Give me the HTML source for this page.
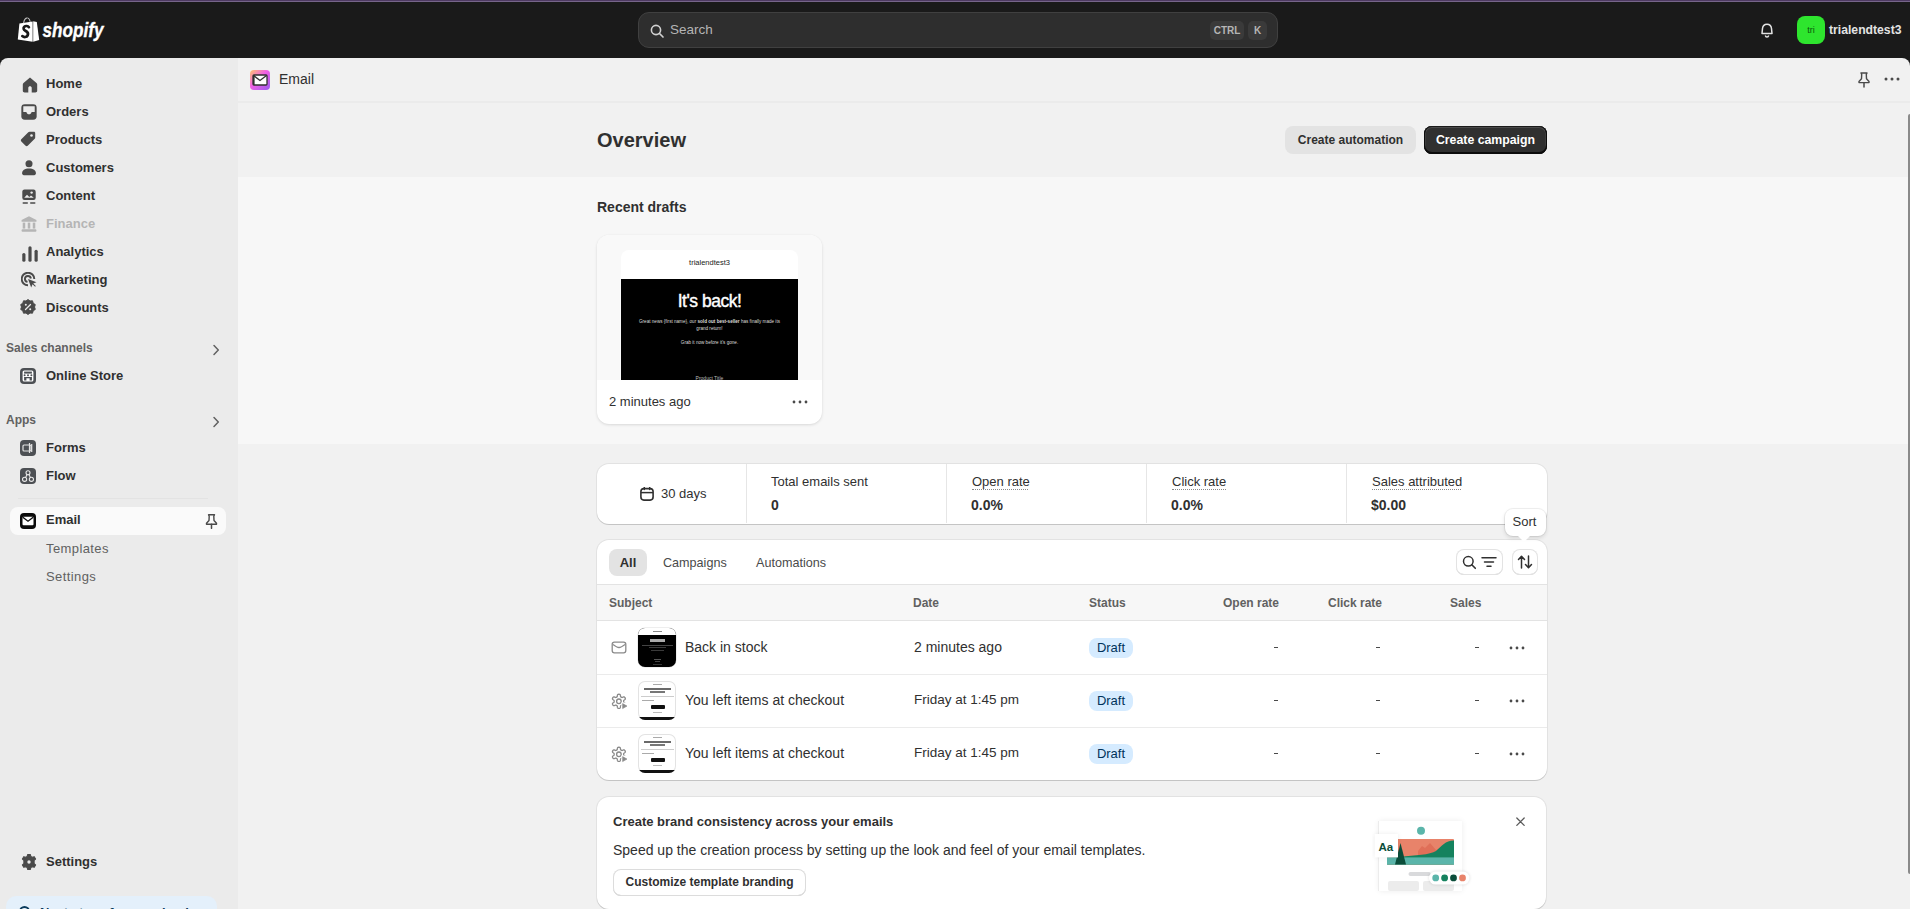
<!DOCTYPE html>
<html><head><meta charset="utf-8">
<style>
*{box-sizing:border-box;margin:0;padding:0}
html,body{width:1910px;height:909px;overflow:hidden;background:#1a1a1a;font-family:"Liberation Sans",sans-serif;color:#303030}
.abs{position:absolute}
#topline{position:absolute;left:0;top:0;width:1910px;height:2px;background:linear-gradient(#4e3a62 0,#4e3a62 1px,#76658a 1px,#76658a 2px);z-index:5}
#topbar{position:absolute;left:0;top:0;width:1910px;height:58px;background:#1a1a1a}
#side{position:absolute;left:0;top:58px;width:238px;height:851px;background:#ebebeb;border-top-left-radius:8px}
#main{position:absolute;left:238px;top:58px;width:1672px;height:851px;background:#f1f1f1;border-top-right-radius:8px;overflow:hidden}
.nav{position:absolute;left:0;width:238px;height:28px;font-size:13px;font-weight:bold;color:#303030}
.nav .ic{position:absolute;left:20px;top:7px;width:16px;height:16px}
.nav .tx{position:absolute;left:46px;top:7px;line-height:15px}
.sub{position:absolute;left:46px;font-size:13px;color:#616161}
.sect{position:absolute;left:6px;font-size:13px;font-weight:bold;color:#616161}
.chev{position:absolute;left:209px;width:12px;height:12px}
.card{position:absolute;background:#fff;border-radius:12px;box-shadow:0 1px 0 rgba(26,26,26,.07),0 0 0 1px rgba(0,0,0,.06) inset, 0 -1px 0 rgba(0,0,0,.05) inset}
</style></head>
<body>
<div id="topline"></div>
<div id="topbar">
  <svg class="abs" style="left:14px;top:14px" width="30" height="32" viewBox="14 14 30 32">
    <path d="M19.4 23.6 L32.6 21.4 L32.6 41.8 L17.8 39.6 Z" fill="#fff"/>
    <path d="M33.2 21.3 L36.8 22.1 L39.2 40.1 L33.2 41.8 Z" fill="#fff"/>
    <path d="M23.6 23.2 C24 20.4 25 18.4 26.6 18.1 C28.2 17.8 29.4 18.8 30.2 21.8" fill="none" stroke="#bbb" stroke-width="1.1"/>
    <path d="M27.2 18.2 C28.2 19 28.8 20.4 29 22" fill="none" stroke="#1a1a1a" stroke-width="0.6"/>
    <path d="M28.9 27.2 C28 25.9 25.6 25.5 24.3 26.7 C23 27.9 23.5 29.7 25.4 30.8 C27.6 32 28.5 33.6 27.7 35.4 C26.8 37.4 23.9 37.5 22.3 36.1" fill="none" stroke="#1a1a1a" stroke-width="2.7" stroke-linecap="round"/>
  </svg>
  <svg class="abs" style="left:42px;top:18px" width="64" height="26" viewBox="0 0 64 26"><text x="0.5" y="18.6" textLength="61" lengthAdjust="spacingAndGlyphs" font-family="Liberation Sans" font-weight="bold" font-style="italic" font-size="19.5" fill="#fff" stroke="#fff" stroke-width="0.35">shopify</text></svg>
  <div class="abs" style="left:638px;top:12px;width:640px;height:36px;background:#2e2e2e;border:1px solid #404040;border-radius:11px"></div>
  <svg class="abs" style="left:650px;top:24px" width="15" height="15" viewBox="0 0 15 15"><circle cx="6" cy="6" r="4.6" fill="none" stroke="#d0d0d0" stroke-width="1.6"/><path d="M9.5 9.5 L13 13" stroke="#d0d0d0" stroke-width="1.7" stroke-linecap="round"/></svg>
  <div class="abs" style="left:670px;top:22px;font-size:13.5px;color:#b5b5b5">Search</div>
  <div class="abs" style="left:1210px;top:21px;width:34px;height:19px;background:#3a3a3a;border-radius:5px;font-size:10px;font-weight:bold;color:#b5b5b5;text-align:center;line-height:20px">CTRL</div>
  <div class="abs" style="left:1248px;top:21px;width:19px;height:19px;background:#3a3a3a;border-radius:5px;font-size:10px;font-weight:bold;color:#b5b5b5;text-align:center;line-height:20px">K</div>
  <svg class="abs" style="left:1758px;top:21px" width="18" height="18" viewBox="0 0 18 18"><path d="M4 12.5 L4.5 7.5 C4.8 4.8 6.7 3.2 9 3.2 C11.3 3.2 13.2 4.8 13.5 7.5 L14 12.5 Z" fill="none" stroke="#e3e3e3" stroke-width="1.5" stroke-linejoin="round"/><path d="M7.3 14.5 C7.5 15.6 8.2 16 9 16 C9.8 16 10.5 15.6 10.7 14.5" fill="none" stroke="#e3e3e3" stroke-width="1.4"/></svg>
  <div class="abs" style="left:1797px;top:16px;width:28px;height:28px;background:#2ee52e;border-radius:8px;font-size:9px;color:#0a5a0a;text-align:center;line-height:28px">tri</div>
  <div class="abs" style="left:1829px;top:23px;font-size:12.2px;font-weight:bold;color:#e3e3e3">trialendtest3</div>
</div>
<div id="side">
</div>
<!-- nav items: baseline = top+12 with line-height 15 at 13px -->
<div class="nav" style="top:76px"><svg class="ic" style="left:22px;top:1px" width="13" height="14" viewBox="0 0 13 14"><path d="M6.5 0.5 L12.2 5.2 C12.6 5.5 12.8 6 12.8 6.5 L12.8 12 C12.8 12.9 12.1 13.5 11.2 13.5 L8 13.5 L8 9.5 C8 8.8 7.3 8.2 6.5 8.2 C5.7 8.2 5 8.8 5 9.5 L5 13.5 L1.8 13.5 C0.9 13.5 0.2 12.9 0.2 12 L0.2 6.5 C0.2 6 0.4 5.5 0.8 5.2 Z" fill="#4a4a4a"/></svg><span class="tx" style="top:0">Home</span></div>
<div class="nav" style="top:104px"><svg class="ic" style="left:21px;top:0" width="14" height="14" viewBox="0 0 14 14"><rect x="0.3" y="0.3" width="13.4" height="13.4" rx="3" fill="#4a4a4a"/><path d="M2 2 L12 2 L12 7 L9.3 7 C9 8.4 8 9 7 9 C6 9 5 8.4 4.7 7 L2 7 Z" fill="#ebebeb"/></svg><span class="tx" style="top:0">Orders</span></div>
<div class="nav" style="top:132px"><svg class="ic" style="left:20px;top:-1px" width="16" height="16" viewBox="0 0 16 16"><path d="M9.5 0.8 L14 0.8 C14.6 0.8 15.2 1.4 15.2 2 L15.2 6.5 C15.2 7 15 7.4 14.7 7.7 L7.7 14.7 C7.1 15.3 6.2 15.3 5.6 14.7 L1.3 10.4 C0.7 9.8 0.7 8.9 1.3 8.3 L8.3 1.3 C8.6 1 9 0.8 9.5 0.8 Z" fill="#4a4a4a"/><circle cx="11.5" cy="4.5" r="1.3" fill="#ebebeb"/></svg><span class="tx" style="top:0">Products</span></div>
<div class="nav" style="top:160px"><svg class="ic" style="left:21px;top:0" width="14" height="15" viewBox="0 0 14 15"><circle cx="7" cy="3.6" r="3.3" fill="#4a4a4a"/><path d="M0.5 12.5 C0.5 9.5 3 8 7 8 C11 8 13.5 9.5 13.5 12.5 C13.5 13.6 12.8 14.2 11.8 14.2 L2.2 14.2 C1.2 14.2 0.5 13.6 0.5 12.5 Z" fill="#4a4a4a"/></svg><span class="tx" style="top:0">Customers</span></div>
<div class="nav" style="top:188px"><svg class="ic" style="left:21px;top:0.5px" width="14" height="16" viewBox="0 0 14 16"><rect x="0.3" y="0.5" width="13.4" height="10.5" rx="2.2" fill="#4a4a4a"/><path d="M2.2 8.8 L5 5.8 L7.3 8 L9 6.5 L11.8 8.8 Z" fill="#ebebeb"/><circle cx="9.6" cy="3.6" r="1.2" fill="#ebebeb"/><rect x="2.5" y="5.5" width="2.6" height="2" fill="#ebebeb" opacity="0"/><rect x="0.5" y="13.3" width="5.5" height="1.5" rx=".7" fill="#4a4a4a"/><rect x="8" y="13.3" width="5.5" height="1.5" rx=".7" fill="#4a4a4a"/></svg><span class="tx" style="top:0">Content</span></div>
<div class="nav" style="top:216px;color:#b5b5b5"><svg class="ic" style="left:21px;top:0" width="14" height="14" viewBox="0 0 14 14"><path d="M7 0.3 L13.5 3.6 L13.5 5 L0.5 5 L0.5 3.6 Z" fill="#b5b5b5"/><rect x="1.5" y="5.8" width="2.2" height="5.2" fill="#b5b5b5"/><rect x="5.9" y="5.8" width="2.2" height="5.2" fill="#b5b5b5"/><rect x="10.3" y="5.8" width="2.2" height="5.2" fill="#b5b5b5"/><rect x="0.5" y="11.6" width="13" height="2.2" rx=".8" fill="#b5b5b5"/></svg><span class="tx" style="top:0">Finance</span></div>
<div class="nav" style="top:244px"><svg class="ic" style="left:22px;top:1.5px" width="12" height="12" viewBox="0 0 12 12"><rect x="0.2" y="5.2" width="2.4" height="6.6" rx="1.2" fill="#4a4a4a"/><rect x="4.8" y="0.2" width="2.4" height="11.6" rx="1.2" fill="#4a4a4a"/><rect x="9.4" y="2.8" width="2.4" height="9" rx="1.2" fill="#4a4a4a"/></svg><span class="tx" style="top:0">Analytics</span></div>
<div class="nav" style="top:272px"><svg class="ic" style="left:21px;top:0" width="16" height="16" viewBox="0 0 16 16"><path d="M13.3 7 A6.3 6.3 0 1 0 7 13.3" fill="none" stroke="#4a4a4a" stroke-width="1.9"/><path d="M9.9 6.5 A3 3 0 1 0 6.5 9.9" fill="none" stroke="#4a4a4a" stroke-width="1.9"/><path d="M7 7 L15.5 10.2 L12.2 11.5 L14.8 14.1 L14.1 14.8 L11.5 12.2 L10.2 15.5 Z" fill="#4a4a4a"/></svg><span class="tx" style="top:0">Marketing</span></div>
<div class="nav" style="top:300px"><svg class="ic" style="left:20px;top:-1px" width="16" height="16" viewBox="0 0 16 16"><path d="M8 0.5 L10 2 L12.5 1.8 L13.2 4.2 L15.3 5.6 L14.5 8 L15.3 10.4 L13.2 11.8 L12.5 14.2 L10 14 L8 15.5 L6 14 L3.5 14.2 L2.8 11.8 L0.7 10.4 L1.5 8 L0.7 5.6 L2.8 4.2 L3.5 1.8 L6 2 Z" fill="#4a4a4a" stroke="#4a4a4a" stroke-width="1" stroke-linejoin="round"/><path d="M5.5 10.5 L10.5 5.5" stroke="#ebebeb" stroke-width="1.3" stroke-linecap="round"/><circle cx="5.8" cy="5.8" r="1" fill="#ebebeb"/><circle cx="10.2" cy="10.2" r="1" fill="#ebebeb"/></svg><span class="tx" style="top:0">Discounts</span></div>

<div class="sect" style="top:341px;font-size:12px;line-height:14px">Sales channels</div>
<svg class="abs" style="left:211px;top:344px" width="10" height="12" viewBox="0 0 10 12"><path d="M3 1.5 L7.3 6 L3 10.5" fill="none" stroke="#616161" stroke-width="1.5" stroke-linecap="round" stroke-linejoin="round"/></svg>
<div class="nav" style="top:368px"><svg class="ic" style="left:20px;top:0" width="16" height="16" viewBox="0 0 16 16"><rect x="0" y="0" width="16" height="16" rx="4" fill="#4d5054"/><rect x="2.6" y="2.4" width="10.8" height="11.2" rx="1.6" fill="#fff"/><rect x="4.1" y="3.6" width="7.8" height="2" fill="#4d5054"/><circle cx="4.6" cy="7.2" r="1" fill="#4d5054"/><circle cx="8" cy="7.2" r="1" fill="#4d5054"/><circle cx="11.4" cy="7.2" r="1" fill="#4d5054"/><path d="M4.1 9 L11.9 9 L11.9 12.6 L9.6 12.6 L9.6 10.3 L6.4 10.3 L6.4 12.6 L4.1 12.6 Z" fill="#4d5054"/></svg><span class="tx" style="top:0">Online Store</span></div>

<div class="sect" style="top:413px;font-size:12px;line-height:14px">Apps</div>
<svg class="abs" style="left:211px;top:416px" width="10" height="12" viewBox="0 0 10 12"><path d="M3 1.5 L7.3 6 L3 10.5" fill="none" stroke="#616161" stroke-width="1.5" stroke-linecap="round" stroke-linejoin="round"/></svg>
<div class="nav" style="top:440px"><svg class="ic" style="left:20px;top:0" width="16" height="16" viewBox="0 0 16 16"><rect x="0" y="0" width="16" height="16" rx="4" fill="#4d5054"/><rect x="3" y="5" width="8" height="6" rx="1" fill="none" stroke="#e3e3e3" stroke-width="1.2"/><path d="M9.5 3 L9.5 13 M11.7 4 L11.7 12" stroke="#e3e3e3" stroke-width="1.2"/></svg><span class="tx" style="top:0">Forms</span></div>
<div class="nav" style="top:468px"><svg class="ic" style="left:20px;top:0" width="16" height="16" viewBox="0 0 16 16"><rect x="0" y="0" width="16" height="16" rx="4" fill="#4d5054"/><circle cx="8" cy="4.8" r="2" fill="none" stroke="#e8e8e8" stroke-width="1.1"/><circle cx="4.6" cy="11.3" r="2.1" fill="none" stroke="#e8e8e8" stroke-width="1.1"/><circle cx="11.4" cy="11.3" r="2.1" fill="none" stroke="#e8e8e8" stroke-width="1.1"/><path d="M7.1 6.6 L5.6 9.4 M8.9 6.6 L10.4 9.4" stroke="#e8e8e8" stroke-width="1.1"/></svg><span class="tx" style="top:0">Flow</span></div>

<div class="abs" style="left:18px;top:498px;width:190px;height:1px;background:#e3e3e3"></div>
<div class="abs" style="left:10px;top:507px;width:216px;height:28px;background:#fafafa;border-radius:8px"></div>
<div class="nav" style="top:508px"><svg class="ic" style="left:20px;top:5px" width="16" height="16" viewBox="0 0 16 16"><rect x="0" y="0" width="16" height="16" rx="4" fill="#0b0b0b"/><rect x="2.5" y="3.8" width="11" height="8.5" rx="1" fill="#fff"/><path d="M2.8 4.3 L8 8.3 L13.2 4.3" fill="none" stroke="#0b0b0b" stroke-width="1.3"/><rect x="2.5" y="11" width="11" height="1.3" fill="#0b0b0b" opacity=".0"/></svg><span class="tx" style="top:4px;color:#303030">Email</span>
<svg class="abs" style="left:205px;top:6px" width="13" height="15" viewBox="0 0 13 15"><path d="M3.5 0.8 L9.5 0.8 L8.8 2.2 L9 6.5 L11.5 9.2 L11.5 10.2 L1.5 10.2 L1.5 9.2 L4 6.5 L4.2 2.2 Z" fill="none" stroke="#4a4a4a" stroke-width="1.4" stroke-linejoin="round"/><path d="M6.5 10.3 L6.5 14.3" stroke="#4a4a4a" stroke-width="1.5" stroke-linecap="round"/></svg></div>
<div class="sub" style="top:541px;line-height:15px;letter-spacing:.4px">Templates</div>
<div class="sub" style="top:569px;line-height:15px;letter-spacing:.4px">Settings</div>

<div class="nav" style="top:854px"><svg class="ic" style="left:21px;top:0" width="15" height="15" viewBox="0 0 15 15"><path d="M6.2 0.5 L8.8 0.5 L9.2 2.3 L10.6 3.1 L12.4 2.5 L13.7 4.8 L12.3 6 L12.3 9 L13.7 10.2 L12.4 12.5 L10.6 11.9 L9.2 12.7 L8.8 14.5 L6.2 14.5 L5.8 12.7 L4.4 11.9 L2.6 12.5 L1.3 10.2 L2.7 9 L2.7 6 L1.3 4.8 L2.6 2.5 L4.4 3.1 L5.8 2.3 Z" fill="#4a4a4a" stroke="#4a4a4a" stroke-width="1" stroke-linejoin="round"/><circle cx="7.5" cy="7.5" r="1.6" fill="#ebebeb"/></svg><span class="tx" style="top:0">Settings</span></div>
<div class="abs" style="left:6px;top:896px;width:211px;height:30px;background:#e4f0fb;border-radius:10px"></div>
<div class="abs" style="left:6px;top:896px;width:211px;height:13px;overflow:hidden">
  <div class="abs" style="left:13px;top:10px;width:11px;height:11px;border-radius:50%;border:2px solid #0b3b5c"></div>
  <div class="abs" style="left:34px;top:9px;font-size:13px;font-weight:bold;color:#0b3b5c;white-space:nowrap">Next steps for your business</div>
</div>
<div id="main"></div>
<!-- header -->
<div class="abs" style="left:238px;top:100.5px;width:1672px;height:2px;background:#ebebeb"></div>
<svg class="abs" style="left:250px;top:70px" width="20" height="20" viewBox="0 0 20 20"><defs><linearGradient id="eg" x1="0" y1="0" x2="1" y2="1"><stop offset="0" stop-color="#ffc46b"/><stop offset=".45" stop-color="#f05fe6"/><stop offset="1" stop-color="#9b5cf0"/></linearGradient></defs><rect width="20" height="20" rx="4" fill="url(#eg)"/><rect x="3" y="5" width="14" height="10" rx="1" fill="#fff" stroke="#303030" stroke-width="1.3"/><path d="M3.5 5.5 L10 10.5 L16.5 5.5" fill="none" stroke="#303030" stroke-width="1.3"/><rect x="3" y="5" width="1.6" height="10" fill="#303030"/></svg>
<div class="abs" style="left:279px;top:71px;font-size:14px;line-height:16px;color:#303030">Email</div>
<svg class="abs" style="left:1857px;top:72px" width="14" height="16" viewBox="0 0 14 16"><path d="M4 1 L10 1 L9.3 2.4 L9.5 6.8 L12 9.5 L12 10.6 L2 10.6 L2 9.5 L4.5 6.8 L4.7 2.4 Z" fill="none" stroke="#4a4a4a" stroke-width="1.4" stroke-linejoin="round"/><path d="M7 10.7 L7 15" stroke="#4a4a4a" stroke-width="1.5" stroke-linecap="round"/></svg>
<svg class="abs" style="left:1884px;top:76px" width="16" height="6" viewBox="0 0 16 6"><circle cx="2" cy="3" r="1.5" fill="#4a4a4a"/><circle cx="8" cy="3" r="1.5" fill="#4a4a4a"/><circle cx="14" cy="3" r="1.5" fill="#4a4a4a"/></svg>

<!-- overview -->
<div class="abs" style="left:597px;top:129px;font-size:20px;line-height:22px;font-weight:bold;color:#303030">Overview</div>
<div class="abs" style="left:1285px;top:126px;width:131px;height:28px;background:#e3e3e3;border-radius:8px;font-size:12px;font-weight:bold;color:#303030;text-align:center;line-height:28px">Create automation</div>
<div class="abs" style="left:1424px;top:126px;width:123px;height:28px;background:#303030;border-radius:8px;font-size:12.3px;font-weight:bold;color:#fff;text-align:center;line-height:28px;box-shadow:0 -1px 0 1px #0c0c0c inset,0 0 0 1px #1a1a1a inset,0 .5px 0 1.5px #4a4a4a inset">Create campaign</div>

<!-- drafts band -->
<div class="abs" style="left:238px;top:177px;width:1672px;height:267px;background:#f7f7f7"></div>
<div class="abs" style="left:597px;top:199px;font-size:14px;line-height:16px;font-weight:bold;color:#303030">Recent drafts</div>
<div class="abs" style="left:597px;top:235px;width:225px;height:189px;background:#fff;border-radius:12px;box-shadow:0 1px 3px rgba(0,0,0,.12),0 0 1px rgba(0,0,0,.06);overflow:hidden">
  <div class="abs" style="left:0;top:0;width:225px;height:145px;background:#f9f9f9"></div>
  <div class="abs" style="left:24px;top:15px;width:177px;height:130px;background:#fff;border-radius:8px 8px 0 0;overflow:hidden">
    <div class="abs" style="left:0;top:29px;width:177px;height:101px;background:#000"></div>
    <div class="abs" style="left:0;top:8px;width:177px;text-align:center;font-size:7.5px;color:#222">trialendtest3</div>
    <div class="abs" style="left:0;top:41px;width:177px;text-align:center;font-size:17.5px;color:#fff;letter-spacing:-0.5px;-webkit-text-stroke:0.4px #fff">It's back!</div>
    <div class="abs" style="left:0;top:68px;width:177px;text-align:center;font-size:4.6px;line-height:7px;color:#ddd">Great news {first name}, our <b>sold out best-seller</b> has finally made its<br>grand return!</div>
    <div class="abs" style="left:0;top:90px;width:177px;text-align:center;font-size:4.6px;color:#ddd">Grab it now before it's gone.</div>
    <div class="abs" style="left:0;top:125px;width:177px;text-align:center;font-size:5px;color:#bbb">Product Title</div>
  </div>
  <div class="abs" style="left:12px;top:159px;font-size:13px;line-height:15px;color:#303030">2 minutes ago</div>
  <svg class="abs" style="left:195px;top:164px" width="16" height="6" viewBox="0 0 16 6"><circle cx="2" cy="3" r="1.4" fill="#4a4a4a"/><circle cx="8" cy="3" r="1.4" fill="#4a4a4a"/><circle cx="14" cy="3" r="1.4" fill="#4a4a4a"/></svg>
</div>

<!-- stats card -->
<div class="abs" style="left:597px;top:464px;width:950px;height:60px;background:#fff;border-radius:12px;box-shadow:0 1px 0 rgba(0,0,0,.13),0 0 0 1px rgba(0,0,0,.06)"></div>
<div class="abs" style="left:746px;top:464px;width:1px;height:59px;background:#e6e6e6"></div>
<div class="abs" style="left:946px;top:464px;width:1px;height:59px;background:#e6e6e6"></div>
<div class="abs" style="left:1146px;top:464px;width:1px;height:59px;background:#e6e6e6"></div>
<div class="abs" style="left:1346px;top:464px;width:1px;height:59px;background:#e6e6e6"></div>
<svg class="abs" style="left:640px;top:487px" width="14" height="14" viewBox="0 0 14 14"><rect x="0.9" y="1.6" width="12.2" height="11.5" rx="3" fill="none" stroke="#303030" stroke-width="1.6"/><path d="M1 5.6 L13 5.6" stroke="#303030" stroke-width="1.5"/><path d="M4.3 0.5 L4.3 2.5 M9.7 0.5 L9.7 2.5" stroke="#303030" stroke-width="1.5" stroke-linecap="round"/></svg>
<div class="abs" style="left:661px;top:486px;font-size:13px;line-height:15px;color:#303030">30 days</div>
<div class="abs" style="left:771px;top:474px;font-size:13px;line-height:15px;color:#303030">Total emails sent</div>
<div class="abs" style="left:771px;top:497px;font-size:14px;line-height:16px;font-weight:bold;color:#303030">0</div>
<div class="abs" style="left:972px;top:474px;font-size:13px;line-height:15px;color:#303030">Open rate</div>
<div class="abs" style="left:972px;top:489px;width:56px;border-bottom:1px dotted #8a8a8a"></div>
<div class="abs" style="left:971px;top:497px;font-size:14px;line-height:16px;font-weight:bold;color:#303030">0.0%</div>
<div class="abs" style="left:1172px;top:474px;font-size:13px;line-height:15px;color:#303030">Click rate</div>
<div class="abs" style="left:1172px;top:489px;width:54px;border-bottom:1px dotted #8a8a8a"></div>
<div class="abs" style="left:1171px;top:497px;font-size:14px;line-height:16px;font-weight:bold;color:#303030">0.0%</div>
<div class="abs" style="left:1372px;top:474px;font-size:13px;line-height:15px;color:#303030">Sales attributed</div>
<div class="abs" style="left:1372px;top:489px;width:89px;border-bottom:1px dotted #8a8a8a"></div>
<div class="abs" style="left:1371px;top:497px;font-size:14px;line-height:16px;font-weight:bold;color:#303030">$0.00</div>

<!-- table card -->
<div class="abs" style="left:597px;top:540px;width:950px;height:240px;background:#fff;border-radius:12px;box-shadow:0 1px 0 rgba(0,0,0,.13),0 0 0 1px rgba(0,0,0,.06);overflow:hidden">
  <div class="abs" style="left:12px;top:9px;width:38px;height:27px;background:#e3e3e3;border-radius:8px"></div>
  <div class="abs" style="left:0;top:15px;width:62px;text-align:center;font-size:13px;line-height:15px;font-weight:bold;color:#303030">All</div>
  <div class="abs" style="left:66px;top:16px;font-size:12.6px;line-height:15px;color:#4a4a4a">Campaigns</div>
  <div class="abs" style="left:159px;top:16px;font-size:12.6px;line-height:15px;color:#4a4a4a">Automations</div>
  <div class="abs" style="left:0;top:44px;width:950px;height:37px;background:#f7f7f7;border-top:1px solid #e3e3e3;border-bottom:1px solid #e3e3e3"></div>
  <div class="abs" style="left:12px;top:56px;font-size:12px;line-height:14px;font-weight:bold;color:#616161">Subject</div>
  <div class="abs" style="left:316px;top:56px;font-size:12px;line-height:14px;font-weight:bold;color:#616161">Date</div>
  <div class="abs" style="left:492px;top:56px;font-size:12px;line-height:14px;font-weight:bold;color:#616161">Status</div>
  <div class="abs" style="left:626px;top:56px;font-size:12px;line-height:14px;font-weight:bold;color:#616161">Open rate</div>
  <div class="abs" style="left:731px;top:56px;font-size:12px;line-height:14px;font-weight:bold;color:#616161">Click rate</div>
  <div class="abs" style="left:853px;top:56px;font-size:12px;line-height:14px;font-weight:bold;color:#616161">Sales</div>
  <div class="abs" style="left:0;top:134px;width:950px;height:1px;background:#ebebeb"></div>
  <div class="abs" style="left:0;top:187px;width:950px;height:1px;background:#ebebeb"></div>

  <div class="abs" style="left:858.5px;top:8.7px;width:47px;height:26.5px;border-radius:8px;background:#fff;box-shadow:0 0 0 1px #e3e3e3 inset,0 -1px 0 #d4d4d4 inset"></div>
  <svg class="abs" style="left:865px;top:15px" width="15" height="15" viewBox="0 0 15 15"><circle cx="6.3" cy="6.3" r="4.8" fill="none" stroke="#303030" stroke-width="1.5"/><path d="M9.8 9.8 L13.3 13.3" stroke="#303030" stroke-width="1.6" stroke-linecap="round"/></svg>
  <svg class="abs" style="left:884px;top:16px" width="16" height="12" viewBox="0 0 16 12"><path d="M1 1.8 L15 1.8 M3.5 6 L12.5 6 M6 10.3 L10 10.3" stroke="#303030" stroke-width="1.5" stroke-linecap="round"/></svg>
  <div class="abs" style="left:914.7px;top:8.7px;width:26.7px;height:26.5px;border-radius:8px;background:#fff;box-shadow:0 0 0 1px #e3e3e3 inset,0 -1px 0 #d4d4d4 inset"></div>
  <svg class="abs" style="left:920px;top:14px" width="16" height="16" viewBox="0 0 16 16"><path d="M4.5 14 L4.5 2.5 M1.5 5.5 L4.5 2.2 L7.5 5.5" fill="none" stroke="#303030" stroke-width="1.5" stroke-linecap="round" stroke-linejoin="round"/><path d="M11.5 2 L11.5 13.5 M8.5 10.5 L11.5 13.8 L14.5 10.5" fill="none" stroke="#303030" stroke-width="1.5" stroke-linecap="round" stroke-linejoin="round"/></svg>
<svg class="abs" style="left:14px;top:100.5px" width="16" height="13" viewBox="0 0 16 13"><rect x="1.2" y="1.2" width="13.6" height="10.6" rx="2.2" fill="none" stroke="#8a8a8a" stroke-width="1.3"/><path d="M2 3.5 C5 5.8 6.5 6.5 8 6.5 C9.5 6.5 11 5.8 14 3.5" fill="none" stroke="#8a8a8a" stroke-width="1.3"/></svg>
<div class="abs" style="left:40.5px;top:88.0px;width:38.5px;height:39px;border-radius:7px;background:#000;overflow:hidden;box-shadow:0 0 0 0.5px #ddd">
<div class="abs" style="left:0;top:0;width:39px;height:7px;background:#fff"></div><div class="abs" style="left:15px;top:3px;width:9px;height:1px;background:#888"></div>
<div class="abs" style="left:12px;top:11px;width:15px;height:3px;background:#aaa"></div>
<div class="abs" style="left:4px;top:17px;width:31px;height:1px;background:#444"></div><div class="abs" style="left:11px;top:19px;width:17px;height:1px;background:#3a3a3a"></div>
<div class="abs" style="left:13px;top:22px;width:13px;height:1px;background:#3a3a3a"></div>
<div class="abs" style="left:16px;top:31px;width:7px;height:1px;background:#555"></div><div class="abs" style="left:17px;top:33px;width:5px;height:1px;background:#444"></div><div class="abs" style="left:15px;top:36px;width:9px;height:1px;background:#333"></div></div>
<div class="abs" style="left:88px;top:98.5px;font-size:14px;line-height:16px;color:#303030">Back in stock</div>
<div class="abs" style="left:317px;top:98.5px;font-size:14px;line-height:16px;color:#303030">2 minutes ago</div>
<div class="abs" style="left:492px;top:98.0px;width:44px;height:20px;border-radius:8px;background:#d5ebff;color:#00335b;font-size:13px;line-height:20px;text-align:center">Draft</div>
<div class="abs" style="left:676.6px;top:107.0px;width:4.4px;height:1.4px;background:#4a4a4a"></div>
<div class="abs" style="left:778.8px;top:107.0px;width:4.4px;height:1.4px;background:#4a4a4a"></div>
<div class="abs" style="left:877.6px;top:107.0px;width:4.4px;height:1.4px;background:#4a4a4a"></div>
<svg class="abs" style="left:912px;top:104.5px" width="16" height="6" viewBox="0 0 16 6"><circle cx="2" cy="3" r="1.4" fill="#4a4a4a"/><circle cx="8" cy="3" r="1.4" fill="#4a4a4a"/><circle cx="14" cy="3" r="1.4" fill="#4a4a4a"/></svg>
<svg class="abs" style="left:14px;top:152.5px" width="17" height="17" viewBox="0 0 17 17"><path d="M12.65 8.30 L12.65 8.42 L12.65 8.55 L12.65 8.67 L12.66 8.80 L12.68 8.93 L12.73 9.06 L12.82 9.21 L12.99 9.38 L13.26 9.59 L13.60 9.83 L13.93 10.09 L14.17 10.34 L14.31 10.57 L14.35 10.78 L14.35 10.97 L14.31 11.15 L14.25 11.33 L14.18 11.50 L14.09 11.66 L14.01 11.83 L13.91 11.98 L13.81 12.14 L13.70 12.28 L13.57 12.42 L13.44 12.55 L13.27 12.65 L13.07 12.71 L12.80 12.71 L12.46 12.63 L12.07 12.47 L11.69 12.30 L11.38 12.17 L11.15 12.10 L10.98 12.10 L10.84 12.13 L10.71 12.17 L10.60 12.23 L10.49 12.29 L10.38 12.35 L10.28 12.41 L10.17 12.48 L10.06 12.54 L9.95 12.60 L9.85 12.67 L9.75 12.75 L9.65 12.86 L9.57 13.02 L9.51 13.25 L9.46 13.58 L9.43 14.00 L9.37 14.42 L9.27 14.75 L9.14 14.98 L8.98 15.13 L8.81 15.22 L8.63 15.27 L8.45 15.31 L8.27 15.33 L8.08 15.35 L7.90 15.35 L7.72 15.35 L7.53 15.33 L7.35 15.31 L7.17 15.27 L6.99 15.22 L6.82 15.13 L6.66 14.98 L6.53 14.75 L6.43 14.42 L6.37 14.00 L6.34 13.58 L6.29 13.25 L6.23 13.02 L6.15 12.86 L6.05 12.75 L5.95 12.67 L5.85 12.60 L5.74 12.54 L5.63 12.48 L5.53 12.41 L5.42 12.35 L5.31 12.29 L5.20 12.23 L5.09 12.17 L4.96 12.13 L4.82 12.10 L4.65 12.10 L4.42 12.17 L4.11 12.30 L3.73 12.47 L3.34 12.63 L3.00 12.71 L2.73 12.71 L2.53 12.65 L2.36 12.55 L2.23 12.42 L2.10 12.28 L1.99 12.14 L1.89 11.98 L1.79 11.83 L1.71 11.66 L1.62 11.50 L1.55 11.33 L1.49 11.15 L1.45 10.97 L1.45 10.78 L1.49 10.57 L1.63 10.34 L1.87 10.09 L2.20 9.83 L2.54 9.59 L2.81 9.38 L2.98 9.21 L3.07 9.06 L3.12 8.93 L3.14 8.80 L3.15 8.67 L3.15 8.55 L3.15 8.42 L3.15 8.30 L3.15 8.18 L3.15 8.05 L3.15 7.93 L3.14 7.80 L3.12 7.67 L3.07 7.54 L2.98 7.39 L2.81 7.22 L2.54 7.01 L2.20 6.77 L1.87 6.51 L1.63 6.26 L1.49 6.03 L1.45 5.82 L1.45 5.63 L1.49 5.45 L1.55 5.27 L1.62 5.10 L1.71 4.94 L1.79 4.78 L1.89 4.62 L1.99 4.46 L2.10 4.32 L2.23 4.18 L2.36 4.05 L2.53 3.95 L2.73 3.89 L3.00 3.89 L3.34 3.97 L3.73 4.13 L4.11 4.30 L4.42 4.43 L4.65 4.50 L4.82 4.50 L4.96 4.47 L5.09 4.43 L5.20 4.37 L5.31 4.31 L5.42 4.25 L5.52 4.19 L5.63 4.12 L5.74 4.06 L5.85 4.00 L5.95 3.93 L6.05 3.85 L6.15 3.74 L6.23 3.58 L6.29 3.35 L6.34 3.02 L6.37 2.60 L6.43 2.18 L6.53 1.85 L6.66 1.62 L6.82 1.47 L6.99 1.38 L7.17 1.33 L7.35 1.29 L7.53 1.27 L7.72 1.25 L7.90 1.25 L8.08 1.25 L8.27 1.27 L8.45 1.29 L8.63 1.33 L8.81 1.38 L8.98 1.47 L9.14 1.62 L9.27 1.85 L9.37 2.18 L9.43 2.60 L9.46 3.02 L9.51 3.35 L9.57 3.58 L9.65 3.74 L9.75 3.85 L9.85 3.93 L9.95 4.00 L10.06 4.06 L10.17 4.12 L10.28 4.19 L10.38 4.25 L10.49 4.31 L10.60 4.37 L10.71 4.43 L10.84 4.47 L10.98 4.50 L11.15 4.50 L11.38 4.43 L11.69 4.30 L12.07 4.13 L12.46 3.97 L12.80 3.89 L13.07 3.89 L13.27 3.95 L13.44 4.05 L13.57 4.18 L13.70 4.32 L13.81 4.46 L13.91 4.62 L14.01 4.78 L14.09 4.94 L14.18 5.10 L14.25 5.27 L14.31 5.45 L14.35 5.63 L14.35 5.82 L14.31 6.03 L14.17 6.26 L13.93 6.51 L13.60 6.77 L13.26 7.01 L12.99 7.22 L12.82 7.39 L12.73 7.54 L12.68 7.67 L12.66 7.80 L12.65 7.93 L12.65 8.05 L12.65 8.18 L12.65 8.30 Z" fill="none" stroke="#8a8a8a" stroke-width="1.3" stroke-linejoin="round"/><circle cx="7.9" cy="8.3" r="2.3" fill="none" stroke="#8a8a8a" stroke-width="1.3"/><path d="M10.3 9.6 L17 9.6 L17 17 L10.3 17 Z" fill="#fff"/><path d="M11.6 10.6 L16 13.1 L11.6 15.6 Z" fill="#8a8a8a" stroke="#8a8a8a" stroke-width="0.6" stroke-linejoin="round"/></svg>
<div class="abs" style="left:40.5px;top:141.0px;width:38.5px;height:39px;border-radius:7px;background:#fff;overflow:hidden;box-shadow:0 0 0 1px #e3e3e3 inset">
<div class="abs" style="left:15px;top:3px;width:9px;height:1px;background:#aaa"></div>
<div class="abs" style="left:6px;top:7px;width:27px;height:2px;background:#6a6a6a"></div><div class="abs" style="left:12px;top:10px;width:15px;height:2px;background:#777"></div>
<div class="abs" style="left:3px;top:15px;width:33px;height:1px;background:#ccc"></div>
<div class="abs" style="left:4px;top:19px;width:12px;height:1px;background:#aaa"></div>
<div class="abs" style="left:12px;top:24px;width:14px;height:4px;border-radius:1px;background:#111;margin-left:1px"></div>
<div class="abs" style="left:15px;top:31px;width:9px;height:1px;background:#bbb"></div>
<div class="abs" style="left:0;top:36px;width:39px;height:3px;background:#111"></div></div>
<div class="abs" style="left:88px;top:151.5px;font-size:14px;line-height:16px;color:#303030">You left items at checkout</div>
<div class="abs" style="left:317px;top:151.5px;font-size:13.5px;line-height:16px;color:#303030">Friday at 1:45 pm</div>
<div class="abs" style="left:492px;top:151.0px;width:44px;height:20px;border-radius:8px;background:#d5ebff;color:#00335b;font-size:13px;line-height:20px;text-align:center">Draft</div>
<div class="abs" style="left:676.6px;top:160.0px;width:4.4px;height:1.4px;background:#4a4a4a"></div>
<div class="abs" style="left:778.8px;top:160.0px;width:4.4px;height:1.4px;background:#4a4a4a"></div>
<div class="abs" style="left:877.6px;top:160.0px;width:4.4px;height:1.4px;background:#4a4a4a"></div>
<svg class="abs" style="left:912px;top:157.5px" width="16" height="6" viewBox="0 0 16 6"><circle cx="2" cy="3" r="1.4" fill="#4a4a4a"/><circle cx="8" cy="3" r="1.4" fill="#4a4a4a"/><circle cx="14" cy="3" r="1.4" fill="#4a4a4a"/></svg>
<svg class="abs" style="left:14px;top:205.5px" width="17" height="17" viewBox="0 0 17 17"><path d="M12.65 8.30 L12.65 8.42 L12.65 8.55 L12.65 8.67 L12.66 8.80 L12.68 8.93 L12.73 9.06 L12.82 9.21 L12.99 9.38 L13.26 9.59 L13.60 9.83 L13.93 10.09 L14.17 10.34 L14.31 10.57 L14.35 10.78 L14.35 10.97 L14.31 11.15 L14.25 11.33 L14.18 11.50 L14.09 11.66 L14.01 11.83 L13.91 11.98 L13.81 12.14 L13.70 12.28 L13.57 12.42 L13.44 12.55 L13.27 12.65 L13.07 12.71 L12.80 12.71 L12.46 12.63 L12.07 12.47 L11.69 12.30 L11.38 12.17 L11.15 12.10 L10.98 12.10 L10.84 12.13 L10.71 12.17 L10.60 12.23 L10.49 12.29 L10.38 12.35 L10.28 12.41 L10.17 12.48 L10.06 12.54 L9.95 12.60 L9.85 12.67 L9.75 12.75 L9.65 12.86 L9.57 13.02 L9.51 13.25 L9.46 13.58 L9.43 14.00 L9.37 14.42 L9.27 14.75 L9.14 14.98 L8.98 15.13 L8.81 15.22 L8.63 15.27 L8.45 15.31 L8.27 15.33 L8.08 15.35 L7.90 15.35 L7.72 15.35 L7.53 15.33 L7.35 15.31 L7.17 15.27 L6.99 15.22 L6.82 15.13 L6.66 14.98 L6.53 14.75 L6.43 14.42 L6.37 14.00 L6.34 13.58 L6.29 13.25 L6.23 13.02 L6.15 12.86 L6.05 12.75 L5.95 12.67 L5.85 12.60 L5.74 12.54 L5.63 12.48 L5.53 12.41 L5.42 12.35 L5.31 12.29 L5.20 12.23 L5.09 12.17 L4.96 12.13 L4.82 12.10 L4.65 12.10 L4.42 12.17 L4.11 12.30 L3.73 12.47 L3.34 12.63 L3.00 12.71 L2.73 12.71 L2.53 12.65 L2.36 12.55 L2.23 12.42 L2.10 12.28 L1.99 12.14 L1.89 11.98 L1.79 11.83 L1.71 11.66 L1.62 11.50 L1.55 11.33 L1.49 11.15 L1.45 10.97 L1.45 10.78 L1.49 10.57 L1.63 10.34 L1.87 10.09 L2.20 9.83 L2.54 9.59 L2.81 9.38 L2.98 9.21 L3.07 9.06 L3.12 8.93 L3.14 8.80 L3.15 8.67 L3.15 8.55 L3.15 8.42 L3.15 8.30 L3.15 8.18 L3.15 8.05 L3.15 7.93 L3.14 7.80 L3.12 7.67 L3.07 7.54 L2.98 7.39 L2.81 7.22 L2.54 7.01 L2.20 6.77 L1.87 6.51 L1.63 6.26 L1.49 6.03 L1.45 5.82 L1.45 5.63 L1.49 5.45 L1.55 5.27 L1.62 5.10 L1.71 4.94 L1.79 4.78 L1.89 4.62 L1.99 4.46 L2.10 4.32 L2.23 4.18 L2.36 4.05 L2.53 3.95 L2.73 3.89 L3.00 3.89 L3.34 3.97 L3.73 4.13 L4.11 4.30 L4.42 4.43 L4.65 4.50 L4.82 4.50 L4.96 4.47 L5.09 4.43 L5.20 4.37 L5.31 4.31 L5.42 4.25 L5.52 4.19 L5.63 4.12 L5.74 4.06 L5.85 4.00 L5.95 3.93 L6.05 3.85 L6.15 3.74 L6.23 3.58 L6.29 3.35 L6.34 3.02 L6.37 2.60 L6.43 2.18 L6.53 1.85 L6.66 1.62 L6.82 1.47 L6.99 1.38 L7.17 1.33 L7.35 1.29 L7.53 1.27 L7.72 1.25 L7.90 1.25 L8.08 1.25 L8.27 1.27 L8.45 1.29 L8.63 1.33 L8.81 1.38 L8.98 1.47 L9.14 1.62 L9.27 1.85 L9.37 2.18 L9.43 2.60 L9.46 3.02 L9.51 3.35 L9.57 3.58 L9.65 3.74 L9.75 3.85 L9.85 3.93 L9.95 4.00 L10.06 4.06 L10.17 4.12 L10.28 4.19 L10.38 4.25 L10.49 4.31 L10.60 4.37 L10.71 4.43 L10.84 4.47 L10.98 4.50 L11.15 4.50 L11.38 4.43 L11.69 4.30 L12.07 4.13 L12.46 3.97 L12.80 3.89 L13.07 3.89 L13.27 3.95 L13.44 4.05 L13.57 4.18 L13.70 4.32 L13.81 4.46 L13.91 4.62 L14.01 4.78 L14.09 4.94 L14.18 5.10 L14.25 5.27 L14.31 5.45 L14.35 5.63 L14.35 5.82 L14.31 6.03 L14.17 6.26 L13.93 6.51 L13.60 6.77 L13.26 7.01 L12.99 7.22 L12.82 7.39 L12.73 7.54 L12.68 7.67 L12.66 7.80 L12.65 7.93 L12.65 8.05 L12.65 8.18 L12.65 8.30 Z" fill="none" stroke="#8a8a8a" stroke-width="1.3" stroke-linejoin="round"/><circle cx="7.9" cy="8.3" r="2.3" fill="none" stroke="#8a8a8a" stroke-width="1.3"/><path d="M10.3 9.6 L17 9.6 L17 17 L10.3 17 Z" fill="#fff"/><path d="M11.6 10.6 L16 13.1 L11.6 15.6 Z" fill="#8a8a8a" stroke="#8a8a8a" stroke-width="0.6" stroke-linejoin="round"/></svg>
<div class="abs" style="left:40.5px;top:194.0px;width:38.5px;height:39px;border-radius:7px;background:#fff;overflow:hidden;box-shadow:0 0 0 1px #e3e3e3 inset">
<div class="abs" style="left:15px;top:3px;width:9px;height:1px;background:#aaa"></div>
<div class="abs" style="left:6px;top:7px;width:27px;height:2px;background:#6a6a6a"></div><div class="abs" style="left:12px;top:10px;width:15px;height:2px;background:#777"></div>
<div class="abs" style="left:3px;top:15px;width:33px;height:1px;background:#ccc"></div>
<div class="abs" style="left:4px;top:19px;width:12px;height:1px;background:#aaa"></div>
<div class="abs" style="left:12px;top:24px;width:14px;height:4px;border-radius:1px;background:#111;margin-left:1px"></div>
<div class="abs" style="left:15px;top:31px;width:9px;height:1px;background:#bbb"></div>
<div class="abs" style="left:0;top:36px;width:39px;height:3px;background:#111"></div></div>
<div class="abs" style="left:88px;top:204.5px;font-size:14px;line-height:16px;color:#303030">You left items at checkout</div>
<div class="abs" style="left:317px;top:204.5px;font-size:13.5px;line-height:16px;color:#303030">Friday at 1:45 pm</div>
<div class="abs" style="left:492px;top:204.0px;width:44px;height:20px;border-radius:8px;background:#d5ebff;color:#00335b;font-size:13px;line-height:20px;text-align:center">Draft</div>
<div class="abs" style="left:676.6px;top:213.0px;width:4.4px;height:1.4px;background:#4a4a4a"></div>
<div class="abs" style="left:778.8px;top:213.0px;width:4.4px;height:1.4px;background:#4a4a4a"></div>
<div class="abs" style="left:877.6px;top:213.0px;width:4.4px;height:1.4px;background:#4a4a4a"></div>
<svg class="abs" style="left:912px;top:210.5px" width="16" height="6" viewBox="0 0 16 6"><circle cx="2" cy="3" r="1.4" fill="#4a4a4a"/><circle cx="8" cy="3" r="1.4" fill="#4a4a4a"/><circle cx="14" cy="3" r="1.4" fill="#4a4a4a"/></svg>
</div>
<!-- tooltip -->
<div class="abs" style="left:1504.5px;top:508.5px;width:41px;height:27px;background:#fff;border-radius:8px;box-shadow:0 0 0 1px rgba(0,0,0,.06),0 2px 4px rgba(0,0,0,.12)"></div>
<svg class="abs" style="left:1516px;top:534px" width="16" height="8" viewBox="0 0 16 8"><path d="M0 0 L16 0 L9 7 C8.5 7.5 7.5 7.5 7 7 Z" fill="#fff"/></svg>
<div class="abs" style="left:1512.5px;top:514px;font-size:13px;line-height:15px;color:#303030">Sort</div>

<!-- banner -->
<div class="abs" style="left:597px;top:796.5px;width:949px;height:112.5px;background:#fff;border-radius:12px;box-shadow:0 1px 0 rgba(0,0,0,.13),0 0 0 1px rgba(0,0,0,.06)"></div>
<div class="abs" style="left:613px;top:814px;font-size:13px;line-height:15px;font-weight:bold;color:#303030">Create brand consistency across your emails</div>
<div class="abs" style="left:613px;top:843px;font-size:14px;line-height:15px;color:#303030">Speed up the creation process by setting up the look and feel of your email templates.</div>
<div class="abs" style="left:613px;top:868.5px;width:193px;height:27px;border-radius:8px;background:#fff;box-shadow:0 0 0 1px #dcdcdc inset,0 -1px 0 #c8c8c8 inset;font-size:12px;font-weight:bold;color:#303030;text-align:center;line-height:26px">Customize template branding</div>
<svg class="abs" style="left:1514px;top:815px" width="13" height="13" viewBox="0 0 13 13"><path d="M2.8 3 L10.2 10.4 M10.2 3 L2.8 10.4" stroke="#5a5a5a" stroke-width="1.3" stroke-linecap="round"/></svg>
<!-- illustration -->
<div class="abs" style="left:1379px;top:821px;width:83px;height:70px;background:#fff;box-shadow:-1px 0 0 #ececec,0 0 6px rgba(0,0,0,.08)"></div>
<svg class="abs" style="left:1372px;top:818px" width="100" height="76" viewBox="1372 818 100 76">
  <circle cx="1421" cy="830.7" r="4" fill="#5bb5aa"/>
  <rect x="1387" y="839" width="67" height="25.5" rx="1" fill="#e8836a"/>
  <path d="M1418 851 L1422 846 L1425 848 L1430 843 L1436 850 L1440 849 L1438 858 L1418 858 Z" fill="#e06f58"/>
  <path d="M1387 857.5 L1400 857 C1415 855 1430 855 1436 851 C1442 846 1445 840.5 1454 840.5 L1454 864.5 L1387 864.5 Z" fill="#15825e"/>
  <rect x="1387" y="857.4" width="67" height="7.1" fill="#5bb5aa"/>
  <path d="M1395 864.5 L1400.5 843 L1406 864.5 Z" fill="#0b4d3a"/>
  <rect x="1408.5" y="872" width="22.3" height="4" rx="2" fill="#d9dadc"/>
  <rect x="1388" y="881" width="31" height="10" rx="2" fill="#ececec"/>
  <rect x="1423" y="881" width="31" height="10" rx="2" fill="#ececec"/>
  <rect x="1374.7" y="834" width="23.3" height="23.4" fill="#fff" style="filter:drop-shadow(0 0 2px rgba(0,0,0,.08))"/>
  <text x="1378.5" y="850.5" font-family="Liberation Sans" font-weight="bold" font-size="11.5" fill="#0b4d3a">Aa</text>
  <rect x="1429" y="871.5" width="40.5" height="13.1" rx="6.5" fill="#fff" style="filter:drop-shadow(0 0 1.5px rgba(0,0,0,.15))"/>
  <circle cx="1435.7" cy="877.9" r="3.4" fill="#5bb5aa"/>
  <circle cx="1444.6" cy="877.9" r="3.4" fill="#15825e"/>
  <circle cx="1453.5" cy="877.9" r="3.4" fill="#0b4d3a"/>
  <circle cx="1462.5" cy="877.9" r="3.4" fill="#e8836a"/>
</svg>
<!-- scrollbar -->
<div class="abs" style="left:1907.5px;top:114px;width:3px;height:760px;background:#8a8a8a;border-radius:2px 0 0 2px"></div>
</body></html>
